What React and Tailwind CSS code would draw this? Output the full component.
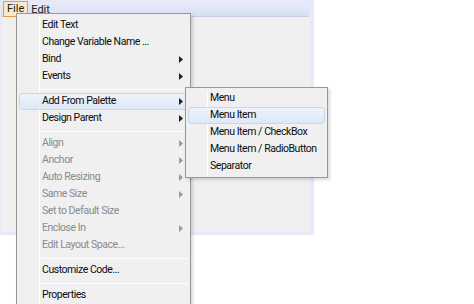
import React from "react";

const MAIN = [
  { label: "Edit Text" },
  { label: "Change Variable Name ..." },
  { label: "Bind", arrow: true },
  { label: "Events", arrow: true },
  { sep: true },
  { label: "Add From Palette", arrow: true, active: true },
  { label: "Design Parent", arrow: true },
  { sep: true },
  { label: "Align", arrow: true, disabled: true },
  { label: "Anchor", arrow: true, disabled: true },
  { label: "Auto Resizing", arrow: true, disabled: true },
  { label: "Same Size", arrow: true, disabled: true },
  { label: "Set to Default Size", disabled: true },
  { label: "Enclose In", arrow: true, disabled: true },
  { label: "Edit Layout Space...", disabled: true },
  { sep: true },
  { label: "Customize Code..." },
  { sep: true },
  { label: "Properties" },
];

const SUB = [
  { label: "Menu" },
  { label: "Menu Item", active: true },
  { label: "Menu Item / CheckBox" },
  { label: "Menu Item / RadioButton" },
  { label: "Separator" },
];

function Arrow({ disabled }) {
  return (
    <svg width="4" height="7" viewBox="0 0 4 7" className="shrink-0">
      <path d="M0 0 L4 3.5 L0 7 Z" fill={disabled ? "#9a9a9a" : "#202020"} />
    </svg>
  );
}

function Item({ item, gutter }) {
  if (item.sep) {
    return (
      <div className="h-[8px] flex items-center" style={{ paddingLeft: gutter + 1 }}>
        <div className="h-px w-full bg-[#e0e0e0] border-b border-white" />
      </div>
    );
  }
  return (
    <div
      className={
        "relative h-[17px] flex items-center pr-[4px] " +
        (item.active
          ? "rounded-[3px] border border-[#c6d7ef] bg-gradient-to-b from-[#eef3fb] to-[#dde8f7]"
          : "border border-transparent")
      }
      style={{ paddingLeft: gutter }}
    >
      <span
        className={
          "flex-1 whitespace-nowrap text-[10.5px] leading-none tracking-[-0.45px] " +
          (item.disabled ? "text-[#8a8a8a]" : "text-[#0c0c0c]")
        }
      >
        {item.label}
      </span>
      {item.arrow && <Arrow disabled={item.disabled} />}
    </div>
  );
}

export default function App() {
  return (
    <div
      className="relative w-[474px] h-[304px] overflow-hidden bg-white"
      style={{ fontFamily: "Roboto, 'Open Sans', sans-serif" }}
    >
      {/* designer form */}
      <div className="w-[314px] h-[235px] bg-[#e9e8f8] pt-[3px] pr-[4px] pb-[3px] flex flex-col">
        <div className="h-[14px] mx-[1px] bg-gradient-to-b from-[#e6ebf7] to-[#d6dff3] flex items-center border-b border-[#c9cfe0]">
          <div className="ml-[2px] h-[16px] mt-[-1px] px-[3px] border border-[#e0a040] bg-[#fbe9c6] text-[11px] leading-[14px] text-[#202020]">
            File
          </div>
          <div className="ml-[3px] text-[11px] leading-[14px] text-[#202020]">Edit</div>
        </div>
        <div className="flex-1 bg-[#f0f0f0] ml-[1px]" />
      </div>

      {/* context menu */}
      <div className="absolute left-[16px] top-[13px] w-[175px] h-[300px] bg-[#f0f0f0] border border-[#979797] shadow-[2px_2px_3px_rgba(0,0,0,0.15)] px-[2px] pt-[3px]">
        <div className="absolute left-[22px] top-[2px] bottom-[2px] w-px bg-[#e2e3e3] border-r border-white" />
        <div className="relative flex flex-col">
          {MAIN.map((item, i) => (
            <Item key={i} item={item} gutter={22} />
          ))}
        </div>
      </div>

      {/* submenu */}
      <div className="absolute left-[185px] top-[87px] w-[143px] bg-[#f0f0f0] border border-[#979797] shadow-[2px_2px_3px_rgba(0,0,0,0.15)] p-[2px]">
        <div className="absolute left-[21px] top-[2px] bottom-[2px] w-px bg-[#e2e3e3] border-r border-white" />
        <div className="relative flex flex-col">
          {SUB.map((item, i) => (
            <Item key={i} item={item} gutter={21} />
          ))}
        </div>
      </div>
    </div>
  );
}
